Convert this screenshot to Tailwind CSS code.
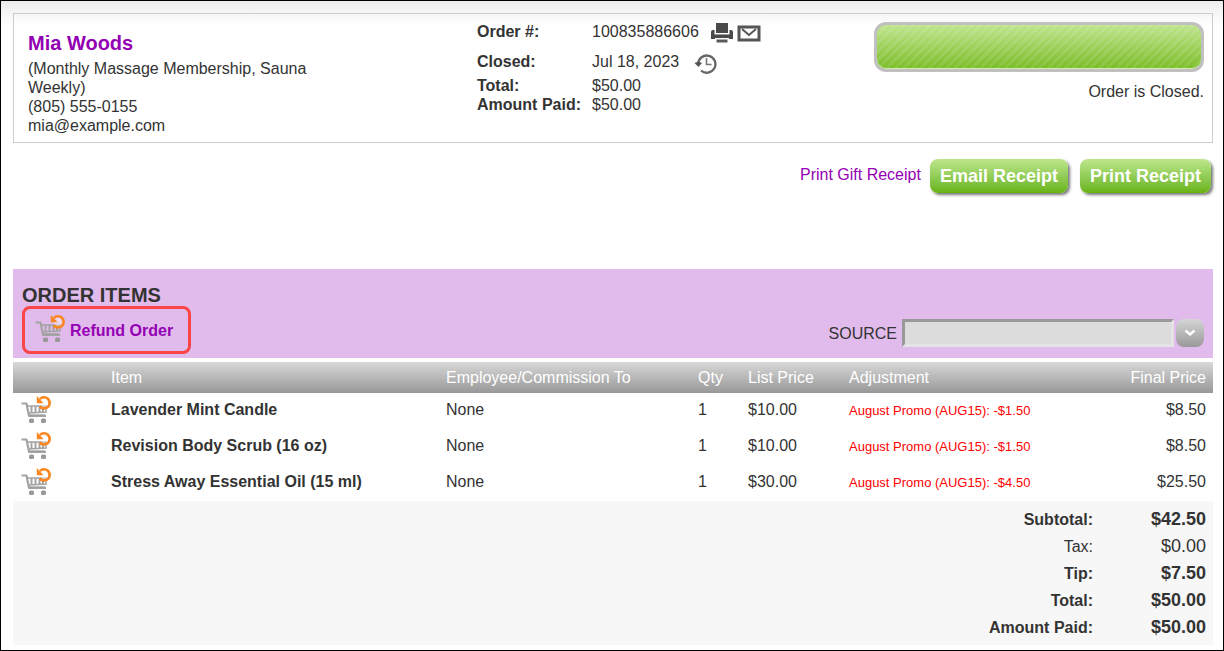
<!DOCTYPE html>
<html lang="en">
<head>
    <meta charset="UTF-8">
    <meta name="viewport" content="width=device-width, initial-scale=1.0">
    <title>Order 100835886606</title>
    <script src="https://cdn.jsdelivr.net/npm/@tailwindcss/browser@4"></script>
</head>
<body class="min-h-screen border border-black bg-white bg-linear-to-b from-[#ececec] to-white to-[26px] pt-3 pr-[10px] pb-[5px] pl-3 font-['Liberation_Sans',Arial,sans-serif] text-base leading-[19px] text-[#333]">

    <!-- Shared icons -->
    <svg class="hidden">
        <symbol id="refund-cart" viewBox="0 0 30 28">
            <g fill="none" stroke="#a3a3a3">
                <path d="M0.5 8.500H5.500L8 20.800H25" stroke-width="2.200" stroke-linejoin="round" />
                <path d="M6 11H25V17L7.500 18" stroke-width="1.500" />
                <path d="M10.500 11v7M14.500 11v7M18.500 11v6.500M22 13v4" stroke-width="2" />
            </g>
            <path d="M8.500 20h15" stroke="#999" stroke-width="1" />
            <rect x="8" y="23.500" width="5" height="4.500" rx="1.500" fill="#999" />
            <rect x="20" y="23.500" width="5" height="4.500" rx="1.500" fill="#999" />
            <circle cx="23.200" cy="7.600" r="4.500" fill="#fff" fill-opacity="0.4" />
            <path d="M19 4A5.600 5.600 0 1 1 18.800 11.500" fill="none" stroke="#f98621" stroke-width="2.700" />
            <path d="M15.800 1v7.200h6.800z" fill="#f98621" />
        </symbol>
    </svg>

    <!-- Order Header -->
    <header class="flex min-h-[130px] justify-between border border-[#ccc] pt-2 pr-2 pb-[6px] pl-[14px]">
        <div class="flex">
            <div class="w-[449px] pt-2 pr-[140px]">
                <h1 class="mb-[3px] text-xl leading-[26px] font-bold"><a href="#" class="text-[#9400b3]">Mia Woods</a></h1>
                <p>(Monthly Massage Membership, Sauna Weekly)</p>
                <p>(805) 555-0155</p>
                <p>mia@example.com</p>
            </div>
            <dl class="grid auto-rows-min grid-cols-[115px_auto]">
                <dt class="h-[30px] font-bold">Order #:</dt>
                <dd class="flex h-[30px] items-start gap-[3px]">
                    <span class="mr-2">100835886606</span>
                    <button type="button" aria-label="Print order">
                        <svg class="h-[21px] w-6" viewBox="0 0 24 21">
                            <path d="M6 1h12v10H6z" fill="#4a4a4a" />
                            <path d="M1 10q0-2 2-2h1.500v4h15V8H21q2 0 2 2v7H1z" fill="#4a4a4a" />
                            <path d="M4.500 12.500h15" stroke="#999" stroke-width="1" />
                            <path d="M5 16h14V21H5z" fill="#fff" />
                            <path d="M6.500 17.500h11v3h-11z" fill="#5a5a5a" />
                        </svg>
                    </button>
                    <button type="button" aria-label="Email order">
                        <svg class="h-[21px] w-6" viewBox="0 0 24 21">
                            <rect x="2" y="5" width="20" height="13" fill="#fff" stroke="#555" stroke-width="3" />
                            <path d="M5 7l7 6 7-6" fill="none" stroke="#555" stroke-width="2" />
                        </svg>
                    </button>
                </dd>
                <dt class="h-6 font-bold">Closed:</dt>
                <dd class="flex h-6 items-start gap-[15px]">
                    <span>Jul 18, 2023</span>
                    <button type="button" aria-label="Order history">
                        <svg class="h-[22px] w-6" viewBox="0 0 24 22">
                            <path d="M4.200 12A8.600 8.600 0 1 1 7 18.500" fill="none" stroke="#666" stroke-width="2.300" />
                            <path d="M0.500 11l4-1.500 3.500 1.500-3.500 4z" fill="#555" />
                            <path d="M12.500 6v6.500h5" fill="none" stroke="#777" stroke-width="1.600" />
                        </svg>
                    </button>
                </dd>
                <dt class="font-bold">Total:</dt>
                <dd>$50.00</dd>
                <dt class="font-bold">Amount Paid:</dt>
                <dd>$50.00</dd>
            </dl>
        </div>
        <div class="text-right">
            <div class="h-[50px] w-[330px] rounded-xl border-3 border-[#c0c0c0] bg-[repeating-linear-gradient(135deg,#ffffff18_0px,#ffffff18_3px,transparent_3px,transparent_6px),linear-gradient(#bfe48e,#79bd26)] shadow-[inset_0_-1px_0_0_#d2efae]"></div>
            <p class="pt-[10px]">Order is Closed.</p>
        </div>
    </header>

    <!-- Receipt Buttons -->
    <div class="mt-4 mr-[2px] flex items-start justify-end">
        <a href="#" class="mr-[9px] pt-[6px] text-[#9400b3]">Print Gift Receipt</a>
        <button type="button" class="mr-3 h-[34px] rounded-lg bg-linear-to-b from-[#bde78a] to-[#68b30a] px-[10px] text-lg leading-[34px] font-bold text-white shadow-[2px_2px_3px_#777]">Email Receipt</button>
        <button type="button" class="h-[34px] rounded-lg bg-linear-to-b from-[#bde78a] to-[#68b30a] px-[10px] text-lg leading-[34px] font-bold text-white shadow-[2px_2px_3px_#777]">Print Receipt</button>
    </div>

    <!-- Order Items -->
    <section class="mt-[76px]">
        <div class="flex items-end justify-between bg-[#e1bbec] px-[9px] pt-[15px] pb-1">
            <div>
                <h2 class="text-xl leading-[22px] font-bold">ORDER ITEMS</h2>
                <a href="#" class="flex h-12 w-[169px] items-center gap-1 rounded-lg border-3 border-[#fb4547] pl-[9px] font-bold text-[#9400b3]">
                    <svg class="mb-1 h-7 w-8"><use href="#refund-cart" /></svg>
                    Refund Order
                </a>
            </div>
            <div class="mb-[7px] flex items-center">
                <label for="source" class="mr-[5px]">SOURCE</label>
                <select id="source" name="source" class="mr-[2px] h-7 w-[272px] appearance-none border-3 border-t-[#999] border-r-[#e4e4e4] border-b-[#e4e4e4] border-l-[#999] bg-[#dcdcdc] px-1">
                    <option value=""></option>
                </select>
                <button type="button" aria-label="Show sources" class="flex h-7 w-7 items-center justify-center rounded-lg bg-linear-to-b from-[#d6d6d6] to-[#999]">
                    <svg class="h-2 w-3" viewBox="0 0 12 8" fill="none" stroke="#fff" stroke-width="2.400">
                        <path d="M1.500 1.500L6 5.500l4.500-4" />
                    </svg>
                </button>
            </div>
        </div>

        <table class="mt-1 w-full table-fixed text-left">
            <colgroup>
                <col class="w-[98px]">
                <col class="w-[335px]">
                <col class="w-[252px]">
                <col class="w-[50px]">
                <col class="w-[101px]">
                <col>
                <col class="w-[120px]">
            </colgroup>
            <thead class="bg-linear-to-b from-[#d8d8d8] to-[#989898] text-white">
                <tr class="h-[31px]">
                    <th></th>
                    <th class="font-normal">Item</th>
                    <th class="font-normal">Employee/Commission To</th>
                    <th class="font-normal">Qty</th>
                    <th class="font-normal">List Price</th>
                    <th class="font-normal">Adjustment</th>
                    <th class="pr-[7px] text-right font-normal">Final Price</th>
                </tr>
            </thead>
            <tbody>
                <tr class="h-9 align-top">
                    <td class="pt-[2px] pl-2"><button type="button" aria-label="Refund item" class="block"><svg class="h-7 w-[30px]"><use href="#refund-cart" /></svg></button></td>
                    <td class="pt-[7px] font-bold">Lavender Mint Candle</td>
                    <td class="pt-[7px]">None</td>
                    <td class="pt-[7px]">1</td>
                    <td class="pt-[7px]">$10.00</td>
                    <td class="pt-2 text-[13px] text-[#f00]">August Promo (AUG15): -$1.50</td>
                    <td class="pt-[7px] pr-[7px] text-right">$8.50</td>
                </tr>
                <tr class="h-9 align-top">
                    <td class="pt-[2px] pl-2"><button type="button" aria-label="Refund item" class="block"><svg class="h-7 w-[30px]"><use href="#refund-cart" /></svg></button></td>
                    <td class="pt-[7px] font-bold">Revision Body Scrub (16 oz)</td>
                    <td class="pt-[7px]">None</td>
                    <td class="pt-[7px]">1</td>
                    <td class="pt-[7px]">$10.00</td>
                    <td class="pt-2 text-[13px] text-[#f00]">August Promo (AUG15): -$1.50</td>
                    <td class="pt-[7px] pr-[7px] text-right">$8.50</td>
                </tr>
                <tr class="h-9 align-top">
                    <td class="pt-[2px] pl-2"><button type="button" aria-label="Refund item" class="block"><svg class="h-7 w-[30px]"><use href="#refund-cart" /></svg></button></td>
                    <td class="pt-[7px] font-bold">Stress Away Essential Oil (15 ml)</td>
                    <td class="pt-[7px]">None</td>
                    <td class="pt-[7px]">1</td>
                    <td class="pt-[7px]">$30.00</td>
                    <td class="pt-2 text-[13px] text-[#f00]">August Promo (AUG15): -$4.50</td>
                    <td class="pt-[7px] pr-[7px] text-right">$25.50</td>
                </tr>
            </tbody>
        </table>

        <!-- Totals -->
        <dl class="grid grid-cols-[1fr_113px] bg-[#f7f7f7] pt-[5px] pr-[7px] pb-1 text-right leading-[27px] font-bold">
            <dt>Subtotal:</dt>
            <dd class="text-lg leading-[27px]">$42.50</dd>
            <dt class="font-normal">Tax:</dt>
            <dd class="text-lg leading-[27px] font-normal">$0.00</dd>
            <dt>Tip:</dt>
            <dd class="text-lg leading-[27px]">$7.50</dd>
            <dt>Total:</dt>
            <dd class="text-lg leading-[27px]">$50.00</dd>
            <dt>Amount Paid:</dt>
            <dd class="text-lg leading-[27px]">$50.00</dd>
        </dl>
    </section>
</body>
</html>
